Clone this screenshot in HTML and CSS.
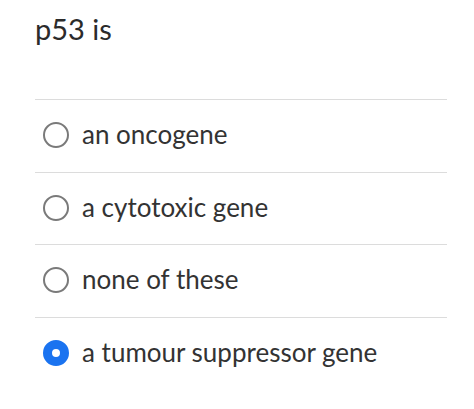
FILE: index.html
```html
<!DOCTYPE html>
<html>
  <head>
    <meta charset="utf-8">
    <title>p53 is</title>
    <link rel="stylesheet" href="styles.css">
  </head>
  <body>
    <div class="question">
      <h1 class="title">p53 is</h1>
      <ul class="options">
        <li class="option"><span class="radio"></span>an oncogene</li>
        <li class="option"><span class="radio"></span>a cytotoxic gene</li>
        <li class="option"><span class="radio"></span>none of these</li>
        <li class="option checked"><span class="radio"></span>a tumour suppressor gene</li>
      </ul>
    </div>
  </body>
</html>
```

FILE: styles.css
```css
body {
  margin: 0;
  background: #fff;
  font-family: Lato, "Noto Sans", sans-serif;
  color: #333;
}
.question {
  padding: 0 27px 0 35px;
}
.title {
  margin: 0;
  padding-top: 11px;
  height: 99px;
  box-sizing: border-box;
  font-size: 29px;
  font-weight: 400;
  line-height: 36px;
  color: #2b2b2b;
}
.options {
  list-style: none;
  margin: 0;
  padding: 0;
}
.option {
  display: flex;
  align-items: center;
  box-sizing: border-box;
  height: 72.5px;
  padding-bottom: 3px;
  border-top: 1.5px solid #dcdcdc;
  font-size: 26px;
  color: #333;
}
.radio {
  box-sizing: border-box;
  width: 26px;
  height: 26px;
  margin: 2px 13px 0 8px;
  border: 2.5px solid #7a7a7a;
  border-radius: 50%;
}
.checked .radio {
  border: 9.5px solid #1a73f0;
}
```
